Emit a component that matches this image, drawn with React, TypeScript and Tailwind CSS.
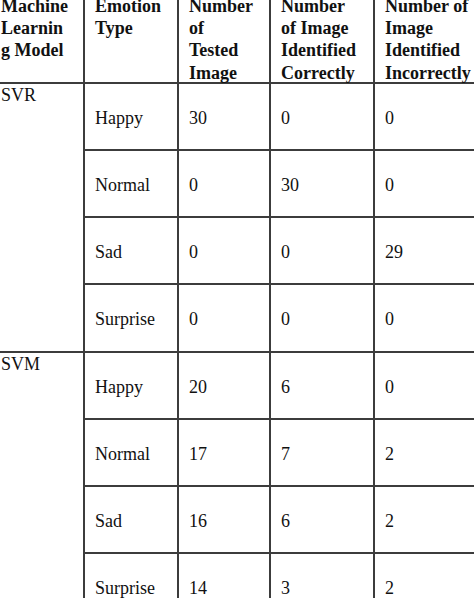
import React from "react";

type Row = { emotion: string; tested: string; correct: string; incorrect: string };

const groups: { model: string; rows: Row[] }[] = [
  {
    model: "SVR",
    rows: [
      { emotion: "Happy", tested: "30", correct: "0", incorrect: "0" },
      { emotion: "Normal", tested: "0", correct: "30", incorrect: "0" },
      { emotion: "Sad", tested: "0", correct: "0", incorrect: "29" },
      { emotion: "Surprise", tested: "0", correct: "0", incorrect: "0" },
    ],
  },
  {
    model: "SVM",
    rows: [
      { emotion: "Happy", tested: "20", correct: "6", incorrect: "0" },
      { emotion: "Normal", tested: "17", correct: "7", incorrect: "2" },
      { emotion: "Sad", tested: "16", correct: "6", incorrect: "2" },
      { emotion: "Surprise", tested: "14", correct: "3", incorrect: "2" },
    ],
  },
];

const headCls = "bg-white pl-[10px] font-bold leading-[22.2px] whitespace-nowrap overflow-visible";
const cellCls = "bg-white pl-[10px] pt-[2px] flex items-center leading-[22px] whitespace-nowrap";

export default function App() {
  return (
    <div
      className="w-[474px] h-[598px] overflow-hidden bg-white text-[#111] text-[18px]"
      style={{ fontFamily: '"Liberation Serif", "Times New Roman", serif' }}
    >
      <div className="-ml-[9px] -mt-[5px] grid w-max grid-cols-[92px_92px_90px_102px_112px] grid-rows-[87px_65px_65px_65px_66px_65px_65px_65px_65px] gap-[2px] bg-[#3c3c3c]">
        <div className={headCls}>
          Machine
          <br />
          Learnin
          <br />g Model
        </div>
        <div className={headCls}>
          Emotion
          <br />
          Type
        </div>
        <div className={headCls}>
          Number
          <br />
          of
          <br />
          Tested
          <br />
          Image
        </div>
        <div className={headCls}>
          Number
          <br />
          of Image
          <br />
          Identified
          <br />
          Correctly
        </div>
        <div className={headCls}>
          Number of
          <br />
          Image
          <br />
          Identified
          <br />
          Incorrectly
        </div>
        {groups.map((g) => (
          <React.Fragment key={g.model}>
            <div className="row-span-4 bg-white pl-[10px] leading-[22px]">{g.model}</div>
            {g.rows.map((r) => (
              <React.Fragment key={g.model + r.emotion}>
                <div className={cellCls}>{r.emotion}</div>
                <div className={cellCls}>{r.tested}</div>
                <div className={cellCls}>{r.correct}</div>
                <div className={cellCls}>{r.incorrect}</div>
              </React.Fragment>
            ))}
          </React.Fragment>
        ))}
      </div>
    </div>
  );
}
